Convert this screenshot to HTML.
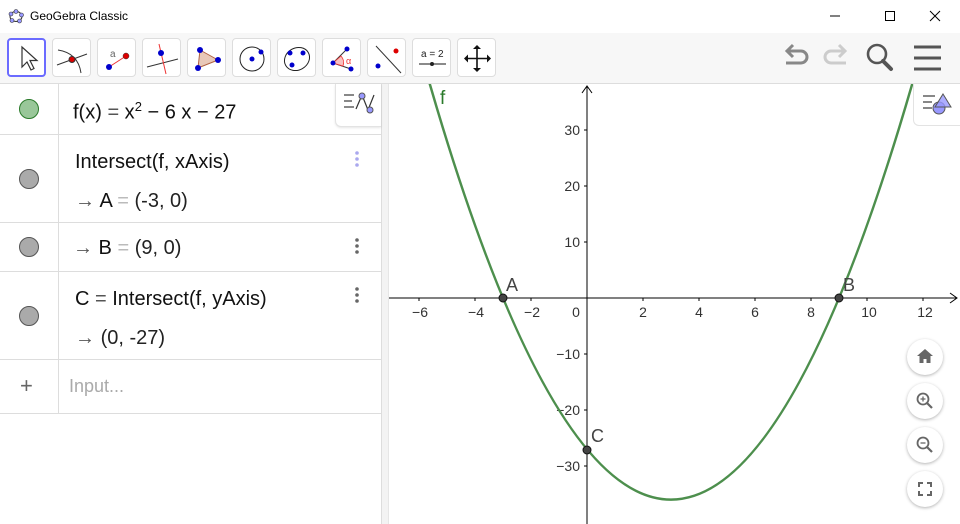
<!DOCTYPE html>
<html><head><meta charset="utf-8"><style>
*{margin:0;padding:0;box-sizing:border-box}
body{width:960px;height:524px;overflow:hidden;background:#fff;font-family:"Liberation Sans","DejaVu Sans",sans-serif;position:relative}
.abs{position:absolute}
.title{left:0;top:0;width:960px;height:33px;background:#fff;font-size:12px;color:#000}
.tb{left:0;top:33px;width:960px;height:51px;background:#f7f7f7;border-bottom:1px solid #ddd}
.btn{position:absolute;top:38px;width:39px;height:39px;background:#fff;border:1px solid #ddd;border-radius:4px}
.btn svg{position:absolute;left:0;top:0}
.row{position:absolute;left:0;width:381px;border-bottom:1px solid #ddd}
.col{position:absolute;left:58px;top:84px;width:1px;height:330px;background:#ddd}
.dot{position:absolute;left:19px;width:20px;height:20px;border-radius:50%;background:#aaa;border:1px solid #555}
.txt{position:absolute;font-size:20px;color:#111;font-family:"Liberation Sans","DejaVu Sans",sans-serif;white-space:nowrap}
.op{color:#bbb}
.bl{color:#222}
.zb{position:absolute;left:907px;width:36px;height:36px;border-radius:50%;background:#fff;box-shadow:0 1px 3px rgba(0,0,0,.3)}
</style></head><body>
<div class="abs title">
<svg class="abs" style="left:8px;top:8px" width="16" height="16" viewBox="0 0 16 16"><ellipse cx="8" cy="8.5" rx="6" ry="5" fill="none" stroke="#333" stroke-width="1"/><g fill="#99f" stroke="#333" stroke-width=".6"><circle cx="3" cy="6" r="2"/><circle cx="8" cy="3.5" r="2"/><circle cx="13.5" cy="7" r="2"/><circle cx="11.5" cy="13" r="2"/><circle cx="4" cy="12.5" r="2"/></g></svg>
<span class="abs" style="left:30px;top:9px">GeoGebra Classic</span>
<svg class="abs" style="left:830px;top:8px" width="120" height="16"><line x1="0" y1="8" x2="10" y2="8" stroke="#000"/><rect x="55.5" y="3.5" width="9" height="9" fill="none" stroke="#000"/><path d="M100 3l10 10M110 3l-10 10" stroke="#000"/></svg>
</div>
<div class="abs tb"></div>
<div class="btn" style="left:7px;border:2px solid #6b6bff"><svg width="37" height="37"><path d="M13 7v20l5-5 4 8 3-1.5-4-8h7z" fill="#fff" stroke="#333" stroke-width="1.2"/></svg></div>
<div class="btn" style="left:52px"><svg width="39" height="39"><path d="M4 26L34 15" stroke="#333"/><path d="M5 11Q25 14 28 34" stroke="#333" fill="none"/><circle cx="19" cy="20.5" r="3" fill="#d00" stroke="#333"/></svg></div>
<div class="btn" style="left:97px"><svg width="39" height="39"><text x="12" y="18" font-size="10" fill="#666" font-family="Liberation Sans">a</text><line x1="11" y1="28" x2="28" y2="17" stroke="#e33"/><circle cx="11" cy="28" r="3" fill="#00c"/><circle cx="28" cy="17" r="3" fill="#d00" stroke="#333" stroke-width=".5"/></svg></div>
<div class="btn" style="left:142px"><svg width="39" height="39"><line x1="4" y1="28" x2="35" y2="20" stroke="#333"/><line x1="16" y1="5" x2="23" y2="35" stroke="#e33"/><circle cx="18" cy="14" r="3" fill="#00c"/></svg></div>
<div class="btn" style="left:187px"><svg width="39" height="39"><path d="M12 11L30 21L10 29z" fill="#e8c8b8" stroke="#b06040"/><circle cx="12" cy="11" r="3" fill="#00c"/><circle cx="30" cy="21" r="3" fill="#00c"/><circle cx="10" cy="29" r="3" fill="#00c"/></svg></div>
<div class="btn" style="left:232px"><svg width="39" height="39"><circle cx="19" cy="20" r="12" fill="none" stroke="#222"/><circle cx="19" cy="20" r="2.5" fill="#00c"/><circle cx="28" cy="13" r="2.5" fill="#00c"/></svg></div>
<div class="btn" style="left:277px"><svg width="39" height="39"><ellipse cx="19" cy="20" rx="13" ry="11" transform="rotate(-30 19 20)" fill="none" stroke="#222"/><circle cx="12" cy="14" r="2.5" fill="#00c"/><circle cx="25" cy="14" r="2.5" fill="#00c"/><circle cx="14" cy="26" r="2.5" fill="#00c"/></svg></div>
<div class="btn" style="left:322px"><svg width="39" height="39"><path d="M10 24L24 10M10 24L28 30" stroke="#333"/><path d="M10 24L18 17A10 10 0 0 1 20 27z" fill="#f9c0c0" stroke="#e33" stroke-width=".8"/><text x="23" y="25" font-size="9" fill="#e33">α</text><circle cx="10" cy="24" r="2.5" fill="#00c"/><circle cx="24" cy="10" r="2.5" fill="#00c"/><circle cx="28" cy="30" r="2.5" fill="#00c"/></svg></div>
<div class="btn" style="left:367px"><svg width="39" height="39"><line x1="8" y1="7" x2="33" y2="34" stroke="#333"/><circle cx="28" cy="12" r="2.5" fill="#d00"/><circle cx="10" cy="27" r="2.5" fill="#00c"/></svg></div>
<div class="btn" style="left:412px"><svg width="39" height="39"><text x="8" y="18" font-size="10" fill="#222" font-family="Liberation Sans">a = 2</text><line x1="6" y1="25" x2="33" y2="25" stroke="#444" stroke-width="1.3"/><circle cx="19" cy="25" r="2" fill="#222"/></svg></div>
<div class="btn" style="left:457px"><svg width="39" height="39"><path d="M19 8v23M8 19.5h23" stroke="#111" stroke-width="1.6"/><path d="M19 6l-4 4h8zM19 33l-4-4h8zM6 19.5l4-4v8zM33 19.5l-4-4v8z" fill="#111"/></svg></div>
<svg class="abs" style="left:780px;top:40px" width="170" height="36"><g fill="none" stroke="#888" stroke-width="3"><path d="M8 11h13a6 6 0 0 1 0 12H6"/><path d="M13 5L7 11l6 6"/></g><g fill="none" stroke="#ccc" stroke-width="3"><path d="M64 11H51a6 6 0 0 0 0 12h15"/><path d="M59 5l6 6-6 6"/></g><circle cx="97" cy="14" r="9" fill="none" stroke="#555" stroke-width="2.6"/><path d="M103 21l8 8" stroke="#555" stroke-width="4" stroke-linecap="round"/><path d="M134 7h27M134 18h27M134 29h27" stroke="#555" stroke-width="3"/></svg>

<div class="row" style="top:84px;height:51px"></div>
<div class="row" style="top:134px;height:89px"></div>
<div class="row" style="top:222px;height:50px"></div>
<div class="row" style="top:271px;height:89px"></div>
<div class="row" style="top:359px;height:55px"></div>
<div class="col"></div>
<div class="abs" style="left:381px;top:84px;width:8px;height:440px;background:#f3f3f3;border-left:1px solid #ddd;border-right:1px solid #e6e6e6"></div>
<div class="dot" style="top:99px;background:#99c799;border-color:#2a7a2a"></div>
<div class="dot" style="top:169px"></div>
<div class="dot" style="top:237px"></div>
<div class="dot" style="top:306px"></div>
<div class="txt" style="left:73px;top:99px">f(x) <span style="color:#555">=</span> x<sup style="font-size:13px">2</sup> − 6 x − 27</div>
<div class="txt" style="left:75px;top:151px">Intersect(f, xAxis)</div>
<div class="txt" style="left:75px;top:190px"><span style="color:#555">→</span> A <span class="op">=</span> <span class="bl">(-3, 0)</span></div>
<div class="txt" style="left:73px;top:237px"><span style="color:#555">→</span> B <span class="op">=</span> <span class="bl">(9, 0)</span></div>
<div class="txt" style="left:75px;top:288px">C <span style="color:#555">=</span> Intersect(f, yAxis)</div>
<div class="txt" style="left:75px;top:327px"><span style="color:#555">→</span> <span class="bl">(0, -27)</span></div>
<div class="txt" style="left:69px;top:376px;color:#aaa;font-size:18px">Input...</div>
<div class="txt" style="left:20px;top:373px;color:#666;font-size:22px">+</div>
<svg class="abs" style="left:354px;top:150px" width="6" height="170"><g fill="#aaa8ee"><circle cx="3" cy="3" r="1.8"/><circle cx="3" cy="9" r="1.8"/><circle cx="3" cy="15" r="1.8"/></g><g fill="#666"><circle cx="3" cy="90" r="1.8"/><circle cx="3" cy="96" r="1.8"/><circle cx="3" cy="102" r="1.8"/><circle cx="3" cy="139" r="1.8"/><circle cx="3" cy="145" r="1.8"/><circle cx="3" cy="151" r="1.8"/></g></svg>
<div class="abs" style="left:335px;top:84px;width:46px;height:43px;background:#fff;border:1px solid #e3e3e3;border-top:none;border-right:none;border-bottom-left-radius:6px;box-shadow:0 1px 2px rgba(0,0,0,.1)"><svg width="46" height="43"><path d="M8 11h10M8 17h8M8 23h10" stroke="#888" stroke-width="2"/><path d="M20 25L26 11L32 26L38 11" stroke="#333" fill="none" stroke-width="1.2"/><circle cx="26" cy="12" r="3" fill="#99f" stroke="#555"/><circle cx="34" cy="26" r="3" fill="#99f" stroke="#555"/></svg></div>

<svg class="abs" style="left:389px;top:84px" width="571" height="440" viewBox="389 84 571 440" font-family="Liberation Sans, sans-serif" font-size="14" fill="#333">
<line x1="389" y1="298" x2="957" y2="298" stroke="#000"/>
<path d="M950 293l7 5-7 5" fill="none" stroke="#000"/>
<line x1="587" y1="87" x2="587" y2="524" stroke="#000"/>
<path d="M582 93l5-7 5 7" fill="none" stroke="#000"/>
<g stroke="#000"><path d="M419 298v3M475 298v3M531 298v3M643 298v3M699 298v3M755 298v3M811 298v3M867 298v3M923 298v3"/><path d="M584 130h3M584 186h3M584 242h3M584 354h3M584 410h3M584 466h3"/></g>
<g text-anchor="middle"><text x="420" y="317">−6</text><text x="476" y="317">−4</text><text x="532" y="317">−2</text><text x="576" y="317">0</text><text x="643" y="317">2</text><text x="699" y="317">4</text><text x="755" y="317">6</text><text x="811" y="317">8</text><text x="869" y="317">10</text><text x="925" y="317">12</text></g>
<g text-anchor="end"><text x="580" y="135">30</text><text x="580" y="191">20</text><text x="580" y="247">10</text><text x="580" y="359">−10</text><text x="580" y="415">−20</text><text x="580" y="471">−30</text></g>
<path d="M391 -60.4Q671 1059.6 951 -60.4" fill="none" stroke="#4d8f4d" stroke-width="2.5"/>
<text x="440" y="104" fill="#2a7a2a" font-size="19">f</text>
<g fill="#444" stroke="#111"><circle cx="503" cy="298" r="4"/><circle cx="839" cy="298" r="4"/><circle cx="587" cy="450" r="4"/></g>
<g font-size="18" fill="#444"><text x="506" y="291">A</text><text x="843" y="291">B</text><text x="591" y="442">C</text></g>
</svg>
<div class="abs" style="left:913px;top:84px;width:47px;height:42px;background:#fff;border:1px solid #e3e3e3;border-top:none;border-right:none;border-bottom-left-radius:6px"><svg width="47" height="42"><path d="M9 12h12M9 18h9M9 24h9" stroke="#888" stroke-width="2"/><circle cx="25" cy="24" r="6" fill="#99f" stroke="#555"/><path d="M29 10l8 13h-16z" fill="#99f" stroke="#555" fill-opacity=".8"/></svg></div>
<div class="zb" style="top:339px"><svg width="36" height="36"><path d="M18 10l-8 7h2.5v7h4v-4h3v4h4v-7H26z" fill="#666"/></svg></div>
<div class="zb" style="top:383px"><svg width="36" height="36"><circle cx="16" cy="16" r="5.5" fill="none" stroke="#666" stroke-width="1.8"/><path d="M20 20l5 5" stroke="#666" stroke-width="2.2"/><path d="M13.5 16h5M16 13.5v5" stroke="#666" stroke-width="1.3"/></svg></div>
<div class="zb" style="top:427px"><svg width="36" height="36"><circle cx="16" cy="16" r="5.5" fill="none" stroke="#666" stroke-width="1.8"/><path d="M20 20l5 5" stroke="#666" stroke-width="2.2"/><path d="M13.5 16h5" stroke="#666" stroke-width="1.3"/></svg></div>
<div class="zb" style="top:471px"><svg width="36" height="36"><path d="M12 16v-4h4M20 12h4v4M24 20v4h-4M16 24h-4v-4" fill="none" stroke="#666" stroke-width="2"/></svg></div>
</body></html>
